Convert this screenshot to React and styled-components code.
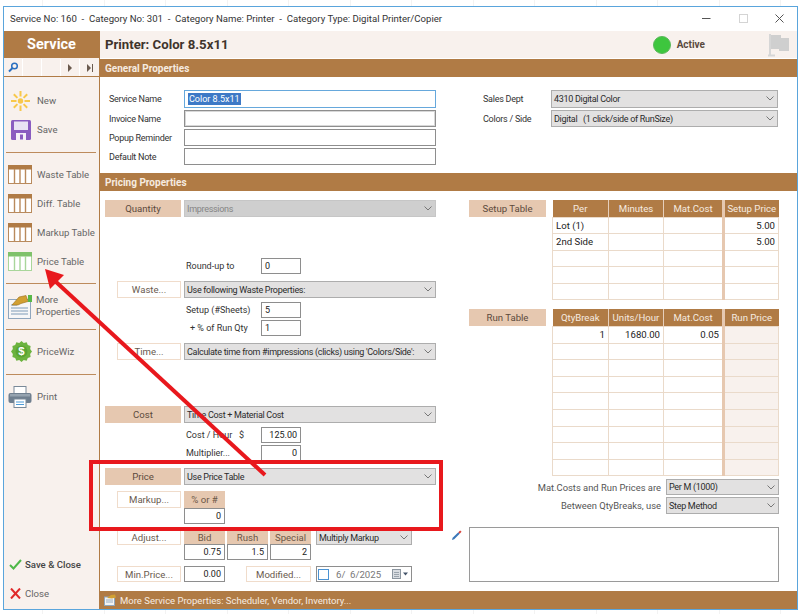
import styled, { createGlobalStyle } from 'styled-components'

const GlobalStyle = createGlobalStyle`
html, body {
    margin: 0;
    padding: 0;
    height: 614px;
    overflow: hidden;
    background-color: #fff;
    background-image: repeating-linear-gradient(90deg, transparent 0 42px, #f3f3f3 42px 43px, transparent 43px 61.5px);
    font-family: Roboto, "Noto Sans", sans-serif;
    font-size: 9.6px;
    color: #333;
}
* { box-sizing: border-box; }
`

const Window = styled.div`
position: relative;
margin: 6px 0 0 3px;
width: 795px;
height: 604px;
background: #fff;
border: 1px solid #5aa5dc;
display: flex;
flex-direction: column;
`

const TitleBar = styled.div`
height: 24px;
flex: none;
display: flex;
align-items: center;
justify-content: space-between;
padding: 0 13px 1px 6px;
white-space: pre;
font-size: 9.6px;
color: #333;
`

const WinButtons = styled.div`
display: flex;
align-items: center;
gap: 27.5px;
`

const Main = styled.div`
flex: 1;
display: flex;
min-height: 0;
`

const Sidebar = styled.div`
width: 96px;
flex: none;
padding-bottom: 1px;
background: #f8f1ed;
border-right: 1px solid #b07b45;
display: flex;
flex-direction: column;
`

const SideHead = styled.div`
height: 27px;
flex: none;
background: #b07b45;
color: #fff;
font-size: 14.5px;
font-weight: 700;
display: flex;
align-items: center;
justify-content: center;
`

const NavRow = styled.div`
height: 18px;
flex: none;
margin-top: 1px;
display: grid;
grid-template-columns: 19px 19px 19px 19px 19px;
border-bottom: 1px solid #b07b45;
`

const NavCell = styled.div`
display: flex;
align-items: center;
justify-content: center;
border-right: 1px solid #fff;
&:last-child { border-right: 0; }
`

const SideItem = styled.div`
height: ${p => p.$h || 29}px;
flex: none;
margin-top: ${p => p.$top || 0}px;
padding-left: ${p => p.$pad || 4}px;
display: flex;
align-items: center;
gap: ${p => p.$gap || 5}px;
color: ${p => p.$bold ? '#444' : '#666'};
font-weight: ${p => p.$bold ? 500 : 400};
line-height: 12px;
`

const SideDivider = styled.div`
height: 1px;
flex: none;
margin: ${p => p.$top}px 3px 0 2px;
background: #bd8b5c;
`

const SideSpacer = styled.div`
flex: 1;
`

const Content = styled.div`
flex: 1;
display: flex;
flex-direction: column;
min-width: 0;
`

const TitleBand = styled.div`
height: 27px;
flex: none;
background: #f8f1ed;
display: flex;
align-items: center;
padding: 0 10px 0 5px;
font-size: 13.2px;
font-weight: 700;
color: #3f342c;
`

const StatusDot = styled.span`
width: 18px;
height: 18px;
margin-left: auto;
border-radius: 50%;
background: #3ec63e;
border: 1px solid #5bb85b;
`

const StatusText = styled.span`
margin: 0 82px 0 6px;
font-size: 10px;
font-weight: 700;
color: #5a4a3e;
`

const FlagIcon = styled.svg`
position: absolute;
right: 7px;
top: 26px;
`

const Band = styled.div`
height: 18px;
flex: none;
margin-top: ${p => p.$top || 0}px;
background: #b07b45;
color: #f6ebe0;
font-weight: 700;
font-size: 10px;
display: flex;
align-items: center;
gap: 3px;
padding-left: ${p => p.$pad || 5}px;
`

const BandNote = styled.span`
font-weight: 400;
font-size: 9.5px;
`

const GeneralBody = styled.div`
height: 96px;
flex: none;
padding: 12px 0 0 9px;
display: flex;
`

const GeneralLeft = styled.div`
width: 327px;
display: grid;
grid-template-columns: 75px 252px;
grid-template-rows: 19px 17px 17px 17px;
row-gap: 2px;
align-content: start;
align-items: center;
`

const GeneralRight = styled.div`
margin-left: 47px;
width: 295px;
display: grid;
grid-template-columns: 68px 227px;
grid-template-rows: 19px 17px;
row-gap: 2px;
align-content: start;
align-items: center;
`

const FieldLabel = styled.span`
font-size: 9px;
letter-spacing: -0.25px;
color: #333;
white-space: pre;
`

const Input = styled.div`
width: ${p => p.$w ? p.$w + 'px' : '100%'};
height: ${p => p.$h || 17}px;
flex: none;
border: 1px solid ${p => p.$focus ? '#66a8dc' : '#8e8e8e'};
outline: 1px solid ${p => p.$soft ? '#d8d8d8' : 'transparent'};
outline-offset: -2px;
background: #fff;
display: flex;
align-items: center;
justify-content: ${p => p.$left ? 'flex-start' : 'flex-end'};
padding: 0 ${p => p.$left ? 0 : 3}px 0 ${p => p.$left ? 3 : 0}px;
font-size: 9px;
color: #222;
`

const Selected = styled.span`
background: #3d79c6;
color: #fff;
padding: 0 1px;
line-height: 12px;
`

const SelectBox = styled.div`
width: ${p => p.$w ? p.$w + 'px' : '100%'};
height: ${p => p.$h || 17}px;
flex: none;
margin-left: ${p => p.$ml || 0}px;
background: ${p => p.$off ? '#cfcfcf' : '#e2e1e1'};
border: 1px solid ${p => p.$off ? '#c6c6c6' : '#adadad'};
color: ${p => p.$off ? '#858585' : '#2b2b2b'};
font-size: 9px;
letter-spacing: -0.3px;
display: flex;
align-items: center;
justify-content: space-between;
padding: 0 3px 0 2px;
white-space: pre;
`

const PricingBody = styled.div`
flex: 1;
min-height: 0;
display: flex;
padding: 9px 0 0 5px;
`

const LeftCol = styled.div`
width: 331px;
flex: none;
display: flex;
flex-direction: column;
`

const RightCol = styled.div`
width: 310px;
margin-left: 33px;
flex: none;
display: flex;
flex-direction: column;
`

const Row = styled.div`
display: flex;
flex: none;
align-items: ${p => p.$start ? 'flex-start' : 'center'};
margin-top: ${p => p.$top || 0}px;
gap: 3px;
`

const Tag = styled.div`
width: ${p => p.$w || 76}px;
height: ${p => p.$h || 17}px;
flex: none;
margin-left: ${p => p.$indent || 0}px;
display: flex;
align-items: center;
justify-content: center;
background: ${p => p.$outline ? '#fff' : '#e6c8b0'};
border: ${p => p.$outline ? '1px solid #f0dccb' : '0'};
color: ${p => p.$outline ? '#6a5a4e' : '#5c4a3c'};
white-space: pre;
`

const SubLabel = styled.span`
width: 72px;
margin-left: 81px;
padding-left: ${p => p.$pad || 0}px;
flex: none;
font-size: 9px;
white-space: pre;
color: #333;
`

const MiniCol = styled.div`
width: 41px;
flex: none;
display: flex;
flex-direction: column;
`

const MiniRow = styled.div`
display: flex;
gap: 2px;
`

const MiniHead = styled.div`
height: ${p => p.$h || 16}px;
background: #e6c8b0;
color: #6a5646;
display: flex;
align-items: center;
justify-content: center;
`

const DateBox = styled.div`
width: 96px;
height: 16px;
margin-left: 2px;
border: 1px solid #8e8e8e;
display: flex;
align-items: center;
padding: 0 2px 0 1px;
color: #777;
white-space: pre;
`

const DateCheck = styled.span`
width: 11px;
height: 11px;
margin-right: 7px;
border: 1px solid #4b93d3;
flex: none;
`

const DateIcon = styled.svg`
margin-left: auto;
`

const TableRow = styled.div`
display: flex;
gap: 6px;
margin-top: ${p => p.$top || 0}px;
`

const Grid = styled.table`
width: 226px;
table-layout: fixed;
border-collapse: collapse;
`

const Th = styled.th`
height: 17px;
padding: 0;
width: ${p => p.$sep ? '60px' : '55px'};
background: #b07b45;
background-clip: padding-box;
color: #f6ebe0;
font-weight: 400;
border-right: ${p => p.$sep ? '3px solid #e6c8b0' : '1px solid #e6cfbb'};
&:first-child { width: 56px; }
&:last-child { border-right: 0; }
`

const Td = styled.td`
height: 16.6px;
padding: 0 3px;
border: 1px solid #eadaca;
border-right: ${p => p.$sep ? '3px solid #e6c8b0' : '1px solid #eadaca'};
background: ${p => p.$tint ? '#f8f1ed' : '#fff'};
text-align: ${p => p.$left ? 'left' : 'right'};
color: #222;
overflow: hidden;
white-space: nowrap;
`

const OptionRow = styled.div`
display: flex;
align-items: center;
justify-content: flex-end;
gap: 5px;
margin-top: ${p => p.$top || 0}px;
font-size: 9.4px;
color: #555;
white-space: pre;
`

const NotesRow = styled.div`
display: flex;
align-items: flex-start;
margin-top: 13px;
`

const Pencil = styled.div`
width: 12px;
margin-left: -18px;
margin-right: 6px;
margin-top: 3px;
flex: none;
`

const Notes = styled.div`
width: 310px;
height: 55px;
flex: none;
border: 1px solid #9a9a9a;
background: #fff;
`

const MarkupFrame = styled.div`
position: absolute;
left: 85px;
top: 453px;
width: 354px;
height: 71px;
border: 4px solid #e8181d;
pointer-events: none;
`

const ArrowLayer = styled.svg`
position: absolute;
left: -4px;
top: -7px;
pointer-events: none;
`

const SaveGlyph = styled.svg`
margin: 0 1px 0 3px;
`

const WizGlyph = styled.svg`
margin-left: 3px;
`

const Chevron = () => (
    <svg width="8" height="5" viewBox="0 0 8 5"><path d="M.5.500L4 4 7.500.500" fill="none" stroke="#777" strokeWidth="1" /></svg>
)

const TableIcon = ({ color = '#b07b45', line = '#b98a5c' }) => (
    <svg width="24" height="19" viewBox="0 0 24 19">
        <rect x="0.500" y="0.500" width="23" height="18" fill="#fff" stroke={line} />
        <rect x="0" y="0" width="24" height="4.500" fill={color} />
        <path d="M6.500 4v14M12 4v14M17.500 4v14" stroke={line} strokeWidth="1.400" />
    </svg>
)

const NewIcon = () => (
    <svg width="24" height="20" viewBox="0 0 24 20">
        <circle cx="12.500" cy="10" r="2.700" fill="#f8c84a" />
        <path d="M12.500 0v5.500M12.500 14.500v5.500M3 10h5.500M16.500 10H22M5.800 3.300l3.600 3.600M15.600 13.100l3.600 3.600M19.200 3.300l-3.600 3.600M9.400 13.100l-3.600 3.600" stroke="#f8c84a" strokeWidth="2" />
    </svg>
)

const SaveIcon = () => (
    <SaveGlyph width="20" height="20" viewBox="0 0 20 20">
        <rect x="0" y="0" width="20" height="20" rx="1.500" fill="#8a5cc0" />
        <rect x="3" y="1.500" width="14" height="8.500" fill="#e9e2f3" />
        <rect x="5" y="13" width="10" height="7" fill="#f4f0f8" />
        <rect x="9" y="14.500" width="3" height="5" fill="#8a5cc0" />
    </SaveGlyph>
)

const MoreIcon = () => (
    <svg width="24" height="25" viewBox="0 0 24 25">
        <rect x="0.500" y="5.500" width="22" height="19" fill="#f7f7f7" stroke="#8fa6bd" />
        <path d="M3 11h6M3 14h17M3 17h17M3 20h17" stroke="#7f9bb8" strokeWidth="1.200" />
        <path d="M4 11L11 3l7-1.500 2 6-7 2-3 1.500z" fill="#d2a032" stroke="#9a6e1c" strokeWidth="0.600" />
        <rect x="20" y="1" width="4" height="7" fill="#58b848" />
    </svg>
)

const WizIcon = () => (
    <WizGlyph width="21" height="21" viewBox="0 0 24 24">
        <path d="M12 0l2.600 2.200 3.300-.8 1.300 3.100 3.200 1.200-.5 3.400L24 12l-2.100 2.900.5 3.400-3.200 1.200-1.300 3.100-3.300-.8L12 24l-2.600-2.200-3.300.8-1.300-3.100-3.200-1.200.5-3.400L0 12l2.100-2.900-.5-3.400 3.200-1.200 1.300-3.100 3.300.8z" fill="#6cb33f" />
        <circle cx="12" cy="12" r="6.800" fill="#5aa432" />
        <text x="12" y="16.500" textAnchor="middle" fontSize="13" fontWeight="700" fill="#fff" fontFamily="Liberation Sans, sans-serif">$</text>
    </WizGlyph>
)

const PrintIcon = () => (
    <svg width="24" height="22" viewBox="0 0 24 22">
        <rect x="6" y="0.500" width="12" height="8" fill="#fff" stroke="#7a8a99" />
        <rect x="0.500" y="7" width="23" height="10" rx="2" fill="#6f7f8f" />
        <rect x="2" y="8" width="20" height="2.500" fill="#95a3b0" />
        <rect x="6" y="13" width="12" height="8.500" fill="#fff" stroke="#7a8a99" />
        <path d="M8 16h8M8 18.500h8" stroke="#4c9ad6" strokeWidth="1" />
    </svg>
)

const SetupRows = [
    ['Lot (1)', '', '', '5.00'],
    ['2nd Side', '', '', '5.00'],
    ['', '', '', ''],
    ['', '', '', ''],
    ['', '', '', ''],
]

const RunRows = [
    ['1', '1680.00', '0.05', ''],
    ...Array.from({ length: 8 }, () => ['', '', '', '']),
]

const App = () => {
    return (
        <>
            <GlobalStyle />
            <Window>
                <TitleBar>
                    <span>Service No: 160  -  Category No: 301  -  Category Name: Printer  -  Category Type: Digital Printer/Copier</span>
                    <WinButtons>
                        <svg width="9" height="9" viewBox="0 0 9 9"><path d="M0 4.500h8.500" stroke="#555" strokeWidth="1" /></svg>
                        <svg width="9" height="9" viewBox="0 0 9 9"><rect x="0.500" y="0.500" width="8" height="8" fill="none" stroke="#d4d4d4" /></svg>
                        <svg width="9" height="9" viewBox="0 0 9 9"><path d="M.5.500l8 8M8.500.500l-8 8" stroke="#555" strokeWidth="1" /></svg>
                    </WinButtons>
                </TitleBar>
                <Main>
                    <Sidebar>
                        <SideHead>Service</SideHead>
                        <NavRow>
                            <NavCell>
                                <svg width="11" height="11" viewBox="0 0 11 11"><circle cx="6.500" cy="4" r="2.800" fill="none" stroke="#2a6fc0" strokeWidth="1.500" /><path d="M4.500 6L1 9.500" stroke="#2a6fc0" strokeWidth="2" /></svg>
                            </NavCell>
                            <NavCell />
                            <NavCell />
                            <NavCell>
                                <svg width="6" height="8" viewBox="0 0 6 8"><path d="M1 0l4 4-4 4z" fill="#6a5a4e" /></svg>
                            </NavCell>
                            <NavCell>
                                <svg width="8" height="8" viewBox="0 0 8 8"><path d="M1 0l4 4-4 4zM6 0h1v8H6z" fill="#6a5a4e" /></svg>
                            </NavCell>
                        </NavRow>
                        <SideItem $top={9}><NewIcon />New</SideItem>
                        <SideItem><SaveIcon />Save</SideItem>
                        <SideDivider $top={8} />
                        <SideItem $top={7}><TableIcon />Waste Table</SideItem>
                        <SideItem><TableIcon />Diff. Table</SideItem>
                        <SideItem><TableIcon />Markup Table</SideItem>
                        <SideItem><TableIcon color="#7fc26b" line="#a9d69b" />Price Table</SideItem>
                        <SideDivider $top={7} />
                        <SideItem $top={5} $h={34} $gap={4}><MoreIcon /><span>More<br />Properties</span></SideItem>
                        <SideDivider $top={6} />
                        <SideItem $top={7}><WizIcon />PriceWiz</SideItem>
                        <SideDivider $top={8} />
                        <SideItem $top={7}><PrintIcon />Print</SideItem>
                        <SideSpacer />
                        <SideItem $pad={5} $gap={3} $bold>
                            <svg width="13" height="11" viewBox="0 0 13 11"><path d="M1 6l3.500 3.500L12 1" fill="none" stroke="#4fb848" strokeWidth="2" /></svg>
                            Save &amp; Close
                        </SideItem>
                        <SideItem $pad={5} $gap={3}>
                            <svg width="13" height="11" viewBox="0 0 13 11"><path d="M2 .500l9 10M11 .500l-9 10" stroke="#e02a2a" strokeWidth="2" /></svg>
                            Close
                        </SideItem>
                    </Sidebar>
                    <Content>
                        <TitleBand>
                            Printer: Color 8.5x11
                            <StatusDot />
                            <StatusText>Active</StatusText>
                            <FlagIcon width="22" height="24" viewBox="0 0 22 24">
                                <path d="M2 1v21" stroke="#d6d6d6" strokeWidth="2" />
                                <path d="M0 22.500h7" stroke="#d6d6d6" strokeWidth="2" />
                                <path d="M3 2h10v3h8v13H11v-2H3z" fill="#cfcfcf" />
                            </FlagIcon>
                        </TitleBand>
                        <Band $top={1}>General Properties</Band>
                        <GeneralBody>
                            <GeneralLeft>
                                <FieldLabel>Service Name</FieldLabel>
                                <Input $focus $left $h={18}><Selected>Color 8.5x11</Selected></Input>
                                <FieldLabel>Invoice Name</FieldLabel>
                                <Input $soft />
                                <FieldLabel>Popup Reminder</FieldLabel>
                                <Input />
                                <FieldLabel>Default Note</FieldLabel>
                                <Input />
                            </GeneralLeft>
                            <GeneralRight>
                                <FieldLabel>Sales Dept</FieldLabel>
                                <SelectBox $h={18}>4310 Digital Color<Chevron /></SelectBox>
                                <FieldLabel>Colors / Side</FieldLabel>
                                <SelectBox>Digital   (1 click/side of RunSize)<Chevron /></SelectBox>
                            </GeneralRight>
                        </GeneralBody>
                        <Band>Pricing Properties</Band>
                        <PricingBody>
                            <LeftCol>
                                <Row>
                                    <Tag>Quantity</Tag>
                                    <SelectBox $off $w={252}>Impressions<Chevron /></SelectBox>
                                </Row>
                                <Row $top={41}>
                                    <SubLabel>Round-up to</SubLabel>
                                    <Input $w={40} $h={16} $left>0</Input>
                                </Row>
                                <Row $top={7}>
                                    <Tag $outline $w={64} $indent={12}>Waste...</Tag>
                                    <SelectBox $w={252}>Use following Waste Properties:<Chevron /></SelectBox>
                                </Row>
                                <Row $top={4}>
                                    <SubLabel>Setup (#Sheets)</SubLabel>
                                    <Input $w={40} $h={16} $left>5</Input>
                                </Row>
                                <Row $top={2}>
                                    <SubLabel $pad={4}>+ % of Run Qty</SubLabel>
                                    <Input $w={40} $h={16} $left>1</Input>
                                </Row>
                                <Row $top={7}>
                                    <Tag $outline $w={64} $indent={12}>Time...</Tag>
                                    <SelectBox $w={252}>Calculate time from #impressions (clicks) using 'Colors/Side':<Chevron /></SelectBox>
                                </Row>
                                <Row $top={46}>
                                    <Tag>Cost</Tag>
                                    <SelectBox $w={252}>Time Cost + Material Cost<Chevron /></SelectBox>
                                </Row>
                                <Row $top={4}>
                                    <SubLabel>Cost / Hour   $</SubLabel>
                                    <Input $w={40} $h={16}>125.00</Input>
                                </Row>
                                <Row $top={2}>
                                    <SubLabel>Multiplier...</SubLabel>
                                    <Input $w={40} $h={16}>0</Input>
                                </Row>
                                <Row $top={7}>
                                    <Tag>Price</Tag>
                                    <SelectBox $w={252}>Use Price Table<Chevron /></SelectBox>
                                </Row>
                                <Row $top={6} $start>
                                    <Tag $outline $w={64} $indent={12}>Markup...</Tag>
                                    <MiniCol>
                                        <MiniHead $h={17}>% or #</MiniHead>
                                        <Input $h={16}>0</Input>
                                    </MiniCol>
                                </Row>
                                <Row $top={6} $start>
                                    <Tag $outline $w={64} $h={15} $indent={12}>Adjust...</Tag>
                                    <MiniRow>
                                        <MiniCol>
                                            <MiniHead $h={14}>Bid</MiniHead>
                                            <Input $h={16}>0.75</Input>
                                        </MiniCol>
                                        <MiniCol>
                                            <MiniHead $h={14}>Rush</MiniHead>
                                            <Input $h={16}>1.5</Input>
                                        </MiniCol>
                                        <MiniCol>
                                            <MiniHead $h={14}>Special</MiniHead>
                                            <Input $h={16}>2</Input>
                                        </MiniCol>
                                    </MiniRow>
                                    <SelectBox $w={96} $h={15} $ml={2}>Multiply Markup<Chevron /></SelectBox>
                                </Row>
                                <Row $top={6}>
                                    <Tag $outline $w={64} $h={16} $indent={12}>Min.Price...</Tag>
                                    <Input $w={41} $h={16}>0.00</Input>
                                    <Tag $outline $w={65} $h={16} $indent={18}>Modified...</Tag>
                                    <DateBox>
                                        <DateCheck />
                                        <span>6/  6/2025</span>
                                        <DateIcon width="17" height="10" viewBox="0 0 17 10">
                                            <rect x="0.500" y="0.500" width="8" height="9" fill="#d9dde2" stroke="#8c96a0" />
                                            <path d="M2 3.500h5M2 5.500h5M2 7.500h5" stroke="#8c96a0" strokeWidth="0.800" />
                                            <path d="M11 3.500h5l-2.500 3z" fill="#44546a" />
                                        </DateIcon>
                                    </DateBox>
                                </Row>
                            </LeftCol>
                            <RightCol>
                                <TableRow>
                                    <Tag $w={77}>Setup Table</Tag>
                                    <Grid>
                                        <thead>
                                            <tr>
                                                <Th>Per</Th>
                                                <Th>Minutes</Th>
                                                <Th $sep>Mat.Cost</Th>
                                                <Th>Setup Price</Th>
                                            </tr>
                                        </thead>
                                        <tbody>
                                            {SetupRows.map((r, i) => (
                                                <tr key={i}>
                                                    <Td $left>{r[0]}</Td>
                                                    <Td>{r[1]}</Td>
                                                    <Td $sep>{r[2]}</Td>
                                                    <Td>{r[3]}</Td>
                                                </tr>
                                            ))}
                                        </tbody>
                                    </Grid>
                                </TableRow>
                                <TableRow $top={9}>
                                    <Tag $w={77}>Run Table</Tag>
                                    <Grid>
                                        <thead>
                                            <tr>
                                                <Th>QtyBreak</Th>
                                                <Th>Units/Hour</Th>
                                                <Th $sep>Mat.Cost</Th>
                                                <Th>Run Price</Th>
                                            </tr>
                                        </thead>
                                        <tbody>
                                            {RunRows.map((r, i) => (
                                                <tr key={i}>
                                                    <Td>{r[0]}</Td>
                                                    <Td>{r[1]}</Td>
                                                    <Td $sep>{r[2]}</Td>
                                                    <Td $tint />
                                                </tr>
                                            ))}
                                        </tbody>
                                    </Grid>
                                </TableRow>
                                <OptionRow $top={3}>
                                    Mat.Costs and Run Prices are
                                    <SelectBox $w={113} $h={16}>Per M (1000)<Chevron /></SelectBox>
                                </OptionRow>
                                <OptionRow $top={2}>
                                    Between QtyBreaks, use
                                    <SelectBox $w={113} $h={17}>Step Method<Chevron /></SelectBox>
                                </OptionRow>
                                <NotesRow>
                                    <Pencil>
                                        <svg width="11" height="11" viewBox="0 0 12 12">
                                            <path d="M1 11l.800-2.500L8 2.500l1.500 1.500-6 6z" fill="#3c78b8" />
                                            <path d="M8 2.500L10 .500l1.500 1.500-2 2z" fill="#d8433c" />
                                        </svg>
                                    </Pencil>
                                    <Notes />
                                </NotesRow>
                            </RightCol>
                        </PricingBody>
                        <Band $pad={4}>
                            <svg width="13" height="12" viewBox="0 0 13 12">
                                <rect x="0.500" y="3" width="10" height="8.500" fill="#f3f3f3" stroke="#8fa6bd" />
                                <path d="M2 6h7M2 8h7" stroke="#7f9bb8" strokeWidth="0.800" />
                                <path d="M3 4l4-3 4-.500 1 3-4 1z" fill="#d2a032" />
                            </svg>
                            <BandNote>More Service Properties: Scheduler, Vendor, Inventory...</BandNote>
                        </Band>
                    </Content>
                </Main>
                <MarkupFrame />
                <ArrowLayer width="800" height="614" viewBox="0 0 800 614">
                    <path d="M265 475L55 281" stroke="#e8181d" strokeWidth="4" fill="none" />
                    <path d="M45 269L64 275L50 289z" fill="#e8181d" />
                </ArrowLayer>
            </Window>
        </>
    )
}

export default App
